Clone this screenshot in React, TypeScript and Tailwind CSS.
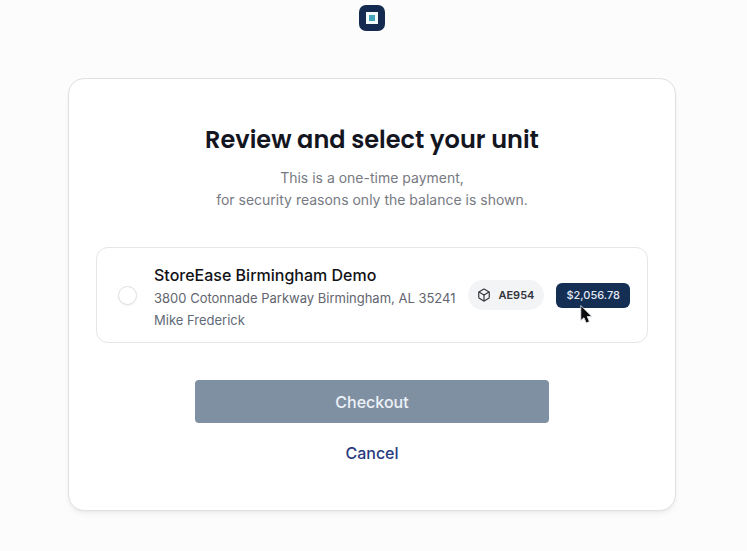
import { useState } from "react"
import { Box } from "lucide-react"

type Unit = {
  id: string
  facility: string
  address: string
  tenant: string
  balance: string
}

const units: Unit[] = [
  {
    id: "AE954",
    facility: "StoreEase Birmingham Demo",
    address: "3800 Cotonnade Parkway Birmingham, AL 35241",
    tenant: "Mike Frederick",
    balance: "$2,056.78",
  },
]

function Logo() {
  return (
    <svg width="26" height="26" viewBox="0 0 26 26" role="img" aria-label="StoreEase">
      <rect width="26" height="26" rx="7" fill="#152a50" />
      <rect x="7" y="7" width="12" height="12" fill="#f4fbfd" />
      <rect x="10" y="10" width="6" height="6" fill="#45a5bd" />
    </svg>
  )
}

function Cursor() {
  return (
    <svg
      className="pointer-events-none absolute top-5.5 left-6"
      width="14"
      height="20"
      viewBox="0 0 14 20"
      aria-hidden="true"
    >
      <path
        d="M0.8 0.5v15l3.2-2.8 2.2 5.3 3.2-1.4-2.2-5.1h4.6z"
        fill="#0b0b0d"
        stroke="#e8edf3"
        strokeWidth="0.8"
        strokeLinejoin="round"
      />
    </svg>
  )
}

function UnitCard({ unit, selected, onSelect }: { unit: Unit; selected: boolean; onSelect: () => void }) {
  return (
    <label className="flex items-center rounded-xl border border-[#e5e6e9] py-[11px] pr-[17px] pl-[21px]">
      <input
        type="radio"
        name="unit"
        value={unit.id}
        checked={selected}
        onChange={onSelect}
        className="size-[19px] shrink-0 appearance-none rounded-full border border-[#dfe0e3] bg-white shadow-xs checked:border-[5px] checked:border-[#152e54]"
      />
      <span className="ml-[17px] flex flex-1 flex-col pt-1 whitespace-nowrap">
        <span className="text-[16px] leading-6 font-medium text-[#111216]">{unit.facility}</span>
        <span className="text-[13px] leading-[22px] text-[#62656f]">{unit.address}</span>
        <span className="text-[13px] leading-[22px] text-[#626b78]">{unit.tenant}</span>
      </span>
      <span className="flex h-[30px] shrink-0 items-center gap-[7px] rounded-full bg-[#f3f4f6] pr-2.5 pl-[9px] text-[11px] font-semibold text-[#33353c]">
        <Box size={14} strokeWidth={2} />
        {unit.id}
      </span>
      <span className="relative ml-3 flex h-[25px] shrink-0 items-center rounded-md bg-[#152e54] px-2.5 text-[11px] font-medium text-[#e3ebf5]">
        {unit.balance}
        <Cursor />
      </span>
    </label>
  )
}

export default function App() {
  const [selectedId, setSelectedId] = useState<string | null>(null)

  return (
    <div className="flex min-h-screen flex-col items-center bg-[#fcfcfc] pt-[5px] pr-[3px] pb-10 font-['Inter','Liberation_Sans',sans-serif]">
      <Logo />

      <main className="mt-[47px] flex w-full max-w-[608px] flex-col rounded-2xl border border-[#dfe0e2] bg-white px-[27px] pt-[41px] pb-[35px] shadow-md shadow-black/5">
        <h1 className="text-center font-['Poppins','Inter',sans-serif] text-[24px] leading-10 font-semibold text-[#13161f]">
          Review and select your unit
        </h1>
        <p className="mt-[7px] text-center text-[14px] leading-[22px] text-[#777a82]">
          This is a one-time payment,
          <br />
          for security reasons only the balance is shown.
        </p>

        <div className="mt-9 flex flex-col gap-3">
          {units.map((unit) => (
            <UnitCard
              key={unit.id}
              unit={unit}
              selected={selectedId === unit.id}
              onSelect={() => setSelectedId(unit.id)}
            />
          ))}
        </div>

        <div className="mx-auto mt-[37px] flex w-full max-w-[354px] flex-col gap-2">
          <button
            type="button"
            disabled={!selectedId}
            className="h-[43px] rounded-sm bg-[#152e54] text-[16px] font-medium text-white disabled:bg-[#8090a3] disabled:text-[#edf2f8]"
          >
            Checkout
          </button>
          <button type="button" className="h-11 text-[16px] font-medium text-[#293a80]">
            Cancel
          </button>
        </div>
      </main>
    </div>
  )
}
